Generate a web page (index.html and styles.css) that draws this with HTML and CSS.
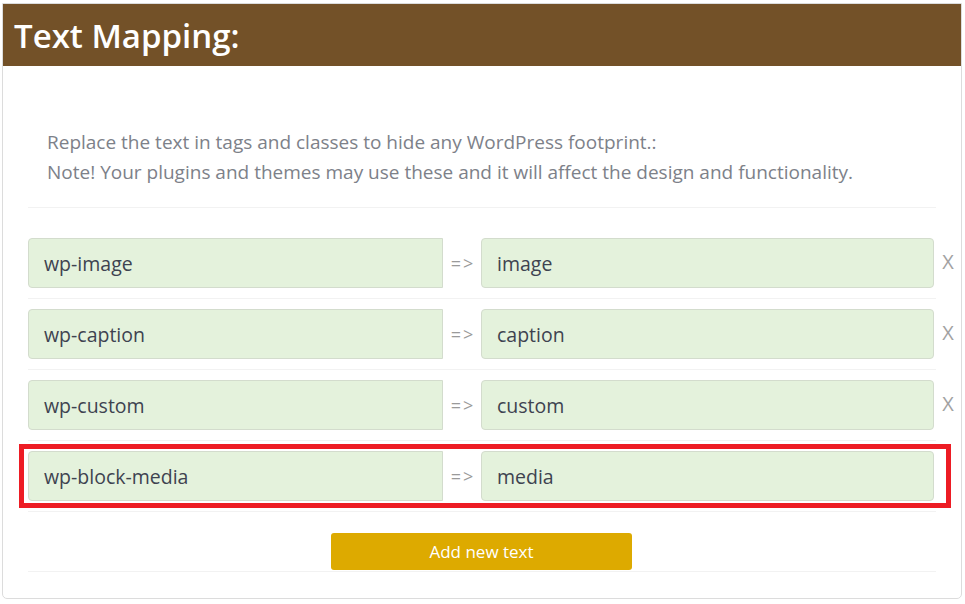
FILE: index.html
```html
<!DOCTYPE html>
<html>
<head>
<meta charset="utf-8">
<link rel="stylesheet" href="styles.css">
</head>
<body>
<div class="card">
  <div class="card-header"><h2 class="title">Text Mapping:</h2></div>
  <div class="card-body">
    <div class="description">
      <div>Replace the text in tags and classes to hide any WordPress footprint.:</div>
      <div>Note! Your plugins and themes may use these and it will affect the design and functionality.</div>
    </div>
    <div class="mapping-list">
      <div class="mapping-item">
        <div class="mapping-row">
          <div class="field field-from">wp-image</div>
          <div class="arrow">=&gt;</div>
          <div class="field field-to">image</div>
          <div class="remove">X</div>
        </div>
      </div>
      <div class="mapping-item">
        <div class="mapping-row">
          <div class="field field-from">wp-caption</div>
          <div class="arrow">=&gt;</div>
          <div class="field field-to">caption</div>
          <div class="remove">X</div>
        </div>
      </div>
      <div class="mapping-item">
        <div class="mapping-row">
          <div class="field field-from">wp-custom</div>
          <div class="arrow">=&gt;</div>
          <div class="field field-to">custom</div>
          <div class="remove">X</div>
        </div>
      </div>
      <div class="mapping-item">
        <div class="mapping-row highlighted">
          <div class="field field-from">wp-block-media</div>
          <div class="arrow">=&gt;</div>
          <div class="field field-to">media</div>
          <div class="remove"></div>
        </div>
      </div>
    </div>
    <div class="actions">
      <button class="btn-add">Add new text</button>
    </div>
  </div>
</div>
</body>
</html>
```
FILE: styles.css
```css
* { box-sizing: border-box; }
html, body { margin: 0; padding: 0; background: #fff; }
body {
  font-family: "Open Sans", "Noto Sans", sans-serif;
  padding: 3px 4px 0 2px;
}
.card {
  width: 960px;
  border: 1px solid #dcdcdc;
  border-radius: 0 0 5px 5px;
  background: #fff;
}
.card-header {
  background: #735128;
  height: 62px;
  display: flex;
  align-items: center;
  padding-left: 11px;
}
.title {
  margin: 0;
  color: #fff;
  font-family: "Open Sans", sans-serif;
  font-weight: 600;
  font-size: 33px;
  line-height: 1;
  padding-top: 1px;
}
.card-body {
  padding: 0 25px 26px 25px;
}
.description {
  padding: 61px 19px 20px 19px;
  border-bottom: 1px solid #f2f2f2;
  color: #7d8189;
  font-size: 19px;
  line-height: 30px;
}
.mapping-list { margin-top: 20px; }
.mapping-item {
  padding: 10px 0;
  border-bottom: 1px solid #f2f2f2;
}
.mapping-row {
  display: flex;
  align-items: center;
  margin-right: -25px;
  position: relative;
}
.field {
  height: 50px;
  background: #e4f2dc;
  border: 1px solid #d3dccd;
  color: #3e4350;
  font-size: 19.5px;
  display: flex;
  align-items: center;
  padding-left: 15px;
  padding-top: 1px;
}
.field-from {
  width: 415px;
  border-radius: 4px 0 0 4px;
}
.field-to {
  width: 453px;
  border-radius: 4px;
}
.arrow {
  width: 38px;
  text-align: center;
  color: #9a9a9a;
  font-size: 18px;
  letter-spacing: 2px;
  padding-left: 2px;
}
.remove {
  width: 26px;
  text-align: center;
  color: #a2a2a2;
  font-size: 20px;
  padding-left: 2px;
  margin-top: -4px;
}
.highlighted::after {
  content: "";
  position: absolute;
  left: -9px;
  right: 10px;
  top: -7px;
  bottom: -7px;
  border: 5px solid #ed1c24;
  pointer-events: none;
}
.actions {
  padding: 21px 0 1px;
  border-bottom: 1px solid #f2f2f2;
  display: flex;
  justify-content: center;
}
.btn-add {
  width: 301px;
  height: 37px;
  background: #ddaa00;
  border: none;
  border-radius: 3px;
  color: #fff;
  font-family: "Open Sans", sans-serif;
  font-size: 17px;
  padding: 0;
  margin-left: -1px;
}
```
